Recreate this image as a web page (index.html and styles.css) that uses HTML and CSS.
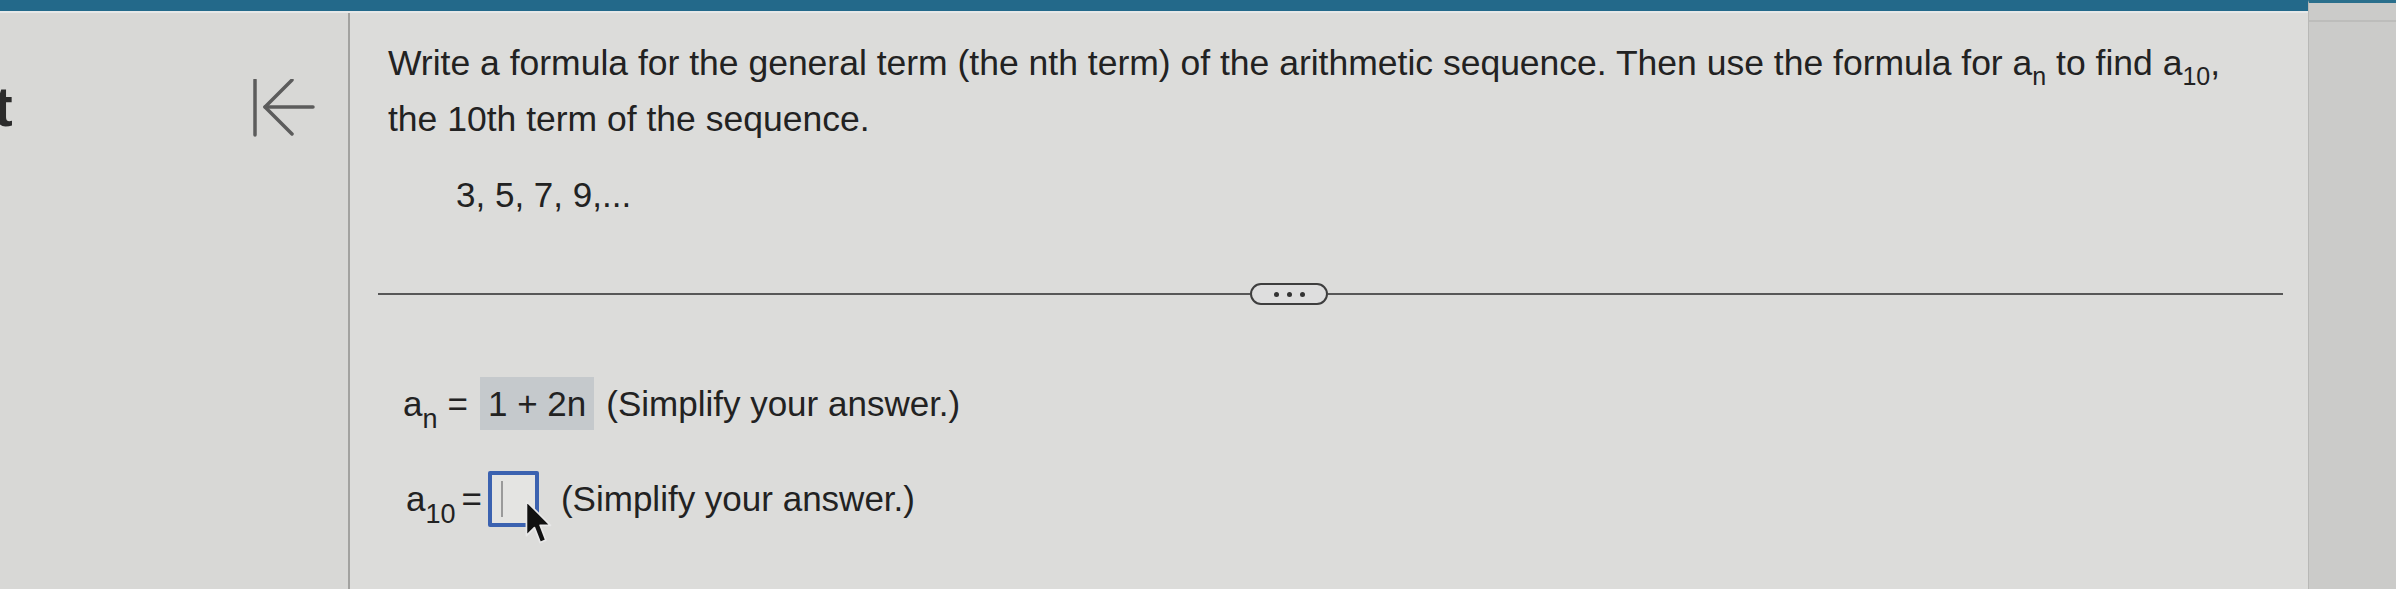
FILE: index.html
```html
<!DOCTYPE html>
<html lang="en">
<head>
<meta charset="utf-8">
<title>Arithmetic sequence</title>
<link rel="stylesheet" href="styles.css">
</head>
<body>
<div class="screen">
  <div class="app">
    <div class="topbar"></div>
    <div class="body">
      <aside class="side">
        <div class="side-row">
          <span class="clip">t</span>
          <svg class="back" width="64" height="58" viewBox="0 0 64 58" aria-hidden="true">
            <line x1="3" y1="1" x2="3" y2="56" />
            <line x1="13" y1="28" x2="61" y2="28" />
            <polyline points="40,1 13,28 40,55" />
          </svg>
        </div>
      </aside>
      <main class="panel">
        <p class="question">Write a formula for the general term (the nth term) of the arithmetic sequence. Then use the formula for a<sub>n</sub> to find a<sub>10</sub>, the 10th term of the sequence.</p>
        <p class="sequence">3, 5, 7, 9,...</p>
        <div class="divider">
          <span class="rule rule-left"></span>
          <span class="more"><i></i><i></i><i></i></span>
          <span class="rule rule-right"></span>
        </div>
        <div class="answer row-an">
          <span class="var">a<sub>n</sub></span>
          <span class="eq">=</span>
          <span class="filled">1 + 2n</span>
          <span class="hint">(Simplify your answer.)</span>
        </div>
        <div class="answer row-a10">
          <span class="var">a<sub>10</sub></span>
          <span class="eq eq-tight">=</span>
          <span class="input"><span class="caret"></span>
            <svg class="pointer" width="30" height="48" viewBox="0 0 26 42" aria-hidden="true">
              <path d="M2 2 L2 32 L9 25 L14 38 L19 36 L14 23 L23 23 Z" />
            </svg>
          </span>
          <span class="hint">(Simplify your answer.)</span>
        </div>
      </main>
    </div>
  </div>
  <div class="edge"></div>
</div>
</body>
</html>
```
FILE: styles.css
```css
html, body {
  margin: 0;
  padding: 0;
}
body {
  width: 2396px;
  height: 589px;
  overflow: hidden;
  background: #d3d3d1;
  font-family: "Liberation Sans", Arial, sans-serif;
  color: #222;
}
.screen {
  display: flex;
  height: 589px;
}
.app {
  width: 2308px;
  display: flex;
  flex-direction: column;
  background: #dbdbd9;
}
.topbar {
  height: 11px;
  background: #23698a;
  border-bottom: 2px solid #e6e8e8;
}
.body {
  flex: 1;
  display: flex;
}
.side {
  width: 350px;
  background: #d8d8d6;
  border-right: 2px solid #a2a2a0;
  padding-top: 63px;
  box-sizing: border-box;
  overflow: hidden;
}
.side-row {
  display: flex;
  align-items: center;
}
.clip {
  font-size: 56px;
  font-weight: bold;
  color: #2b2b2b;
  margin-left: -6px;
  margin-top: -2px;
}
.back {
  margin-left: auto;
  margin-right: 32px;
  fill: none;
  stroke: #5c5c5c;
  stroke-width: 3.5;
  stroke-linecap: round;
  stroke-linejoin: round;
}
.panel {
  flex: 1;
  padding: 22px 0 0 38px;
  background: #dcdcda;
}
.question {
  margin: 0;
  width: 1850px;
  font-size: 35.5px;
  line-height: 56px;
}
sub {
  font-size: 25px;
  vertical-align: -10px;
  line-height: 0;
}
.sequence {
  margin: 20px 0 0 68px;
  font-size: 35px;
  line-height: 56px;
}
.divider {
  display: flex;
  align-items: center;
  margin: 60px 25px 0 -10px;
}
.rule {
  height: 2px;
  background: #575757;
}
.rule-left {
  width: 872px;
}
.rule-right {
  flex: 1;
}
.more {
  width: 74px;
  height: 18px;
  border: 2px solid #3e3e3e;
  border-radius: 11px;
  display: flex;
  align-items: center;
  justify-content: center;
  gap: 8px;
  background: #dedede;
}
.more i {
  width: 5px;
  height: 5px;
  border-radius: 50%;
  background: #333;
}
.answer {
  display: flex;
  align-items: center;
  font-size: 35px;
  margin-left: 15px;
}
.row-an {
  margin-top: 72px;
  height: 53px;
}
.row-a10 {
  margin-top: 41px;
  height: 56px;
  margin-left: 18px;
}
.var sub {
  font-size: 27px;
  vertical-align: -12px;
}
.eq {
  margin: 0 12px 0 10px;
}
.eq-tight {
  margin: 0 6px 0 6px;
}
.filled {
  background: #c5c9cc;
  height: 53px;
  display: flex;
  align-items: center;
  padding: 0 8px;
  margin-right: 12px;
}
.input {
  position: relative;
  width: 43px;
  height: 48px;
  border: 4px solid #3b62b0;
  border-radius: 2px;
  background: #e4e4e2;
  margin-right: 22px;
}
.caret {
  position: absolute;
  left: 9px;
  top: 6px;
  width: 2px;
  height: 36px;
  background: #9a9a9a;
}
.pointer {
  position: absolute;
  left: 32px;
  top: 24px;
  fill: #111;
  stroke: #e8e8e8;
  stroke-width: 1.5;
  stroke-linejoin: round;
}
.edge {
  flex: 1;
  background: #cbcbc9;
  border-left: 1px solid #b8b8b6;
  border-top: 3px solid #2a6f8c;
}
.edge::before {
  content: "";
  display: block;
  margin-top: 17px;
  height: 2px;
  background: #bdbdbb;
}
```
